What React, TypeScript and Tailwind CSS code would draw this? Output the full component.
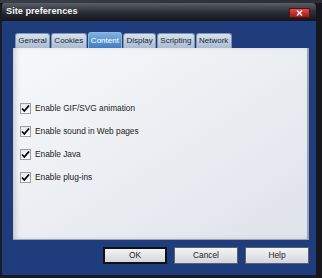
import React from "react";

const tabs = ["General", "Cookies", "Content", "Display", "Scripting", "Network"];
const opts = [
  "Enable GIF/SVG animation",
  "Enable sound in Web pages",
  "Enable Java",
  "Enable plug-ins",
];

function Check({ label }: { label: string }) {
  return (
    <div className="flex items-center h-[23px]">
      <div className="w-[11px] h-[11px] border border-[#9aa0aa] bg-gradient-to-b from-[#e4e7ec] to-[#ffffff] flex items-center justify-center">
        <svg width="9" height="9" viewBox="0 0 9 9">
          <path d="M1 4.5 L3.3 7 L8 1.5" stroke="#000" strokeWidth="1.8" fill="none" />
        </svg>
      </div>
      <span className="ml-[4px] text-[8.3px] text-[#222]">{label}</span>
    </div>
  );
}

function Btn({ label, def }: { label: string; def?: boolean }) {
  return (
    <div
      className={
        "w-[64px] h-[17px] flex items-center justify-center text-[8.3px] text-[#222] bg-gradient-to-b from-[#f4f4f4] to-[#d4d6da] " +
        (def ? "border-2 border-[#101010]" : "border border-[#5a6270]")
      }
    >
      {label}
    </div>
  );
}

export default function App() {
  return (
    <div
      className="w-[322px] h-[278px] bg-[#15171d] overflow-hidden flex flex-col"
      style={{ fontFamily: "'Liberation Sans', Arial, sans-serif" }}
    >
      <div className="h-[3px] bg-gradient-to-r from-[#3a3e46] to-[#2a2d34]" />
      <div className="w-[316px] flex-1 flex flex-col rounded-t-[4px] overflow-hidden border-l-2 border-[#1a1c24]">
        <div className="h-[18px] bg-gradient-to-b from-[#5a5f69] via-[#2c2f37] to-[#141519] flex items-center justify-between pl-[4px] pr-[6px]">
          <span className="text-[9.2px] font-bold text-[#f2f2f2]">Site preferences</span>
          <div className="w-[21px] h-[10px] mt-[1px] bg-gradient-to-b from-[#e24a4a] to-[#a01818] border border-[#5a1010] flex items-center justify-center">
            <svg width="7" height="6" viewBox="0 0 7 6">
              <path d="M1 0.5 L6 5.5 M6 0.5 L1 5.5" stroke="#fff" strokeWidth="1.4" />
            </svg>
          </div>
        </div>
        <div className="flex-1 bg-[#1f3d7c] border-b-[3px] border-[#1a1c24] pl-[11px] pt-[12px] flex flex-col">
          <div className="flex items-end h-[15px] pl-[2px]">
            {tabs.map((t) => {
              const active = t === "Content";
              return (
                <div
                  key={t}
                  className={
                    "px-[2.3px] mr-[1px] rounded-t-[3px] flex items-center text-[8px] border border-b-0 " +
                    (active
                      ? "h-[16px] bg-gradient-to-b from-[#7fb0e0] to-[#3f7cc0] text-white border-[#8bb6e2]"
                      : "h-[15px] bg-gradient-to-b from-[#d8e2ee] to-[#a9bbd2] text-[#1c2430] border-[#7f94b0]")
                  }
                >
                  {t}
                </div>
              );
            })}
          </div>
          <div className="w-[296px] h-[192px] bg-gradient-to-br from-[#f7f8fa] to-[#dfe3ea] border-r-2 border-b border-[#9aa3b2] shadow-[inset_4px_0_6px_-3px_rgba(0,0,0,0.25)] pl-[7px] pt-[49px]">
            {opts.map((o) => (
              <Check key={o} label={o} />
            ))}
          </div>
          <div className="flex gap-[7px] pl-[90px] mt-[7px]">
            <Btn label="OK" def />
            <Btn label="Cancel" />
            <Btn label="Help" />
          </div>
        </div>
      </div>
    </div>
  );
}
